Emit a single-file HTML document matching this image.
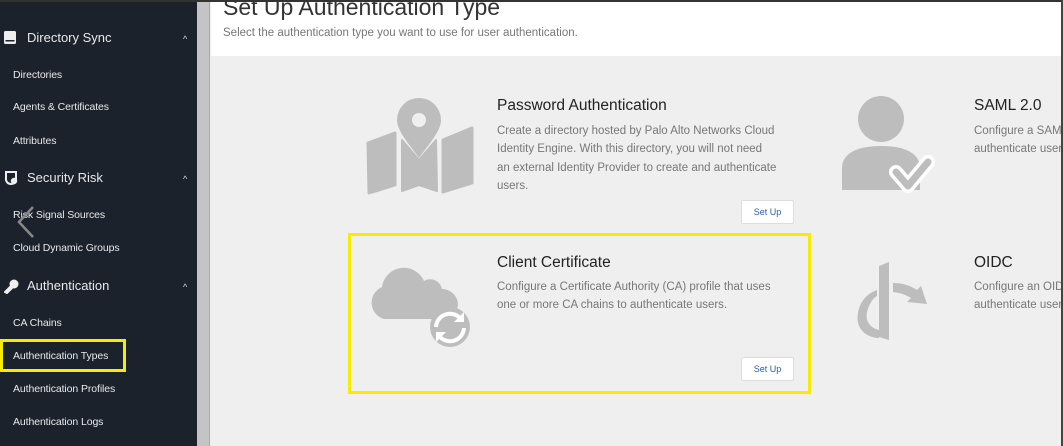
<!DOCTYPE html>
<html><head><style>
*{margin:0;padding:0;box-sizing:border-box}
body{width:1063px;height:446px;overflow:hidden;background:#efefef;font-family:"Liberation Sans",sans-serif;position:relative}
.sb{position:absolute;left:0;top:0;width:197px;height:446px;background:#1b222c;color:#fff}
.strip{position:absolute;left:197px;top:0;width:13px;height:446px;background:#c4c4c4;border-right:1px solid #aaa}
.hdr{position:absolute;left:211px;top:0;width:852px;height:56px;background:#fff}
.topline{position:absolute;left:0;top:0;width:1063px;height:2px;background:#333}
.rline{position:absolute;right:0;top:0;width:2px;height:446px;background:#444}
.sec{position:absolute;left:27px;font-size:13px;color:#e8e8e8}
.car{position:absolute;left:183px;font-size:9px;color:#ddd}
.it{position:absolute;left:13px;font-size:10.5px;color:#e8e8e8;letter-spacing:-0.1px}
.t{position:absolute;color:#222;font-size:15.5px}
.d{position:absolute;color:#777;font-size:11.5px;line-height:18.3px;white-space:nowrap}
.btn{position:absolute;width:53px;height:24px;background:#fff;border:1px solid #ddd;border-radius:2px;color:#2a5db0;font-size:9px;text-align:center;line-height:22px}
</style></head><body>
<div class="sb">
 <svg style="position:absolute;left:4px;top:31px" width="13" height="14"><rect x="0" y="0" width="12" height="13" rx="1.5" fill="#eee"/><rect x="1.5" y="9" width="9" height="1.5" fill="#1b222c"/></svg>
 <div class="sec" style="top:30px">Directory Sync</div><div class="car" style="top:34px">^</div>
 <div class="it" style="top:69px">Directories</div>
 <div class="it" style="top:101px">Agents &amp; Certificates</div>
 <div class="it" style="top:135px">Attributes</div>
 <svg style="position:absolute;left:4px;top:171px" width="15" height="15"><path d="M2 1h10v6a5 5 0 0 1-5 6a5 5 0 0 1-5-6z" fill="none" stroke="#eee" stroke-width="2"/><circle cx="10" cy="10" r="3.2" fill="#eee"/></svg>
 <div class="sec" style="top:170px">Security Risk</div><div class="car" style="top:174px">^</div>
 <div class="it" style="top:209px">Risk Signal Sources</div>
 <svg style="position:absolute;left:16px;top:205px" width="20" height="34"><path d="M17 2L3 17L17 32" fill="none" stroke="#888" stroke-width="2.5"/></svg>
 <div class="it" style="top:242px">Cloud Dynamic Groups</div>
 <svg style="position:absolute;left:4px;top:279px" width="15" height="15"><circle cx="10" cy="5" r="4.5" fill="#eee"/><path d="M8 6L1 13l2 1 6-6" fill="#eee" stroke="#eee" stroke-width="2"/></svg>
 <div class="sec" style="top:278px">Authentication</div><div class="car" style="top:282px">^</div>
 <div class="it" style="top:317px">CA Chains</div>
 <div style="position:absolute;left:0;top:339px;width:126px;height:33px;border:3px solid #f7eb00"></div>
 <div class="it" style="top:350px">Authentication Types</div>
 <div class="it" style="top:383px">Authentication Profiles</div>
 <div class="it" style="top:416px">Authentication Logs</div>
</div>
<div class="strip"></div>
<div class="hdr">
 <div style="position:absolute;left:12px;top:-6px;font-size:23px;color:#333">Set Up Authentication Type</div>
 <div style="position:absolute;left:12px;top:27px;font-size:11.5px;color:#777">Select the authentication type you want to use for user authentication.</div>
</div>
<!-- map icon in page coords -->
<svg style="position:absolute;left:0;top:0" width="1063" height="446">
 <path d="M368 143 L395 133 L395 185 L369 193 Z" fill="#bdbdbd" stroke="#bdbdbd" stroke-width="3" stroke-linejoin="round"/>
 <path d="M402 140 L419 160 L436 140 L437 191 L419 185 L402 191 Z" fill="#bdbdbd" stroke="#bdbdbd" stroke-width="2" stroke-linejoin="round"/>
 <path d="M443 140 L472 128 L472 183 L443 192 Z" fill="#bdbdbd" stroke="#bdbdbd" stroke-width="3" stroke-linejoin="round"/>
 <path d="M419 98a22 22 0 0 1 22 22c0 11-12 24-22 38c-10-14-22-27-22-38a22 22 0 0 1 22-22z" fill="#bdbdbd"/>
 <circle cx="419" cy="120" r="7" fill="#efefef"/>
</svg>
<div class="t" style="left:497px;top:97px">Password Authentication</div>
<div class="d" style="left:497px;top:122px">Create a directory hosted by Palo Alto Networks Cloud<br>Identity Engine. With this directory, you will not need<br>an external Identity Provider to create and authenticate<br>users.</div>
<div class="btn" style="left:741px;top:200px">Set Up</div>
<div style="position:absolute;left:348px;top:233px;width:463px;height:161px;border:3px solid #f7eb00"></div>
<svg style="position:absolute;left:366px;top:254px" width="106" height="96" viewBox="0 0 106 96">
 <path d="M18 65a17 17 0 0 1 -2-32a22 22 0 0 1 42-6a12 12 0 0 1 18 8a16 16 0 0 1 16 16a16 16 0 0 1-16 14z" fill="#bdbdbd"/>
 <circle cx="84" cy="73" r="20" fill="#bdbdbd"/>
 <path d="M70 73a14 14 0 0 1 24-9M98 74a14 14 0 0 1-24 9" fill="none" stroke="#fff" stroke-width="4"/>
 <path d="M98 58v10h-10z M70 88v-10h10z" fill="#fff"/>
</svg>
<div class="t" style="left:497px;top:254px">Client Certificate</div>
<div class="d" style="left:497px;top:278px">Configure a Certificate Authority (CA) profile that uses<br>one or more CA chains to authenticate users.</div>
<div class="btn" style="left:741px;top:357px">Set Up</div>
<svg style="position:absolute;left:840px;top:96px" width="95" height="98" viewBox="0 0 95 98">
 <circle cx="41" cy="23" r="23" fill="#bdbdbd"/>
 <path d="M2 94v-22c0-14 14-22 39-22s39 8 39 22v22z" fill="#bdbdbd"/>
 <path d="M66 78l12 14 20-24" fill="none" stroke="#fff" stroke-width="14" stroke-linejoin="round" stroke-linecap="round" transform="translate(-10,-2)"/>
 <path d="M66 78l12 14 20-24" fill="none" stroke="#bdbdbd" stroke-width="7" stroke-linejoin="round" stroke-linecap="round" transform="translate(-10,-2)"/>
</svg>
<div class="t" style="left:974px;top:97px">SAML 2.0</div>
<div class="d" style="left:974px;top:122px">Configure a SAML 2.0 profile to<br>authenticate users.</div>
<svg style="position:absolute;left:855px;top:258px" width="90" height="82" viewBox="0 0 90 82">
 <path d="M24 8l10-4v78l-10-3z" fill="#bdbdbd"/>
 <path d="M22 32c-18 6-22 26-18 36c4 8 12 12 20 12l0-8c-8-2-14-8-12-18c2-8 6-14 10-16z" fill="#bdbdbd"/>
 <path d="M38 25c10 0 18 3 24 7l4-4 6 18-20-2 4-4c-5-3-10-5-18-6z" fill="#bdbdbd"/>
</svg>
<div class="t" style="left:974px;top:254px">OIDC</div>
<div class="d" style="left:974px;top:278px">Configure an OIDC profile to<br>authenticate users.</div>
<div class="topline"></div>
<div class="rline"></div>
</body></html>
